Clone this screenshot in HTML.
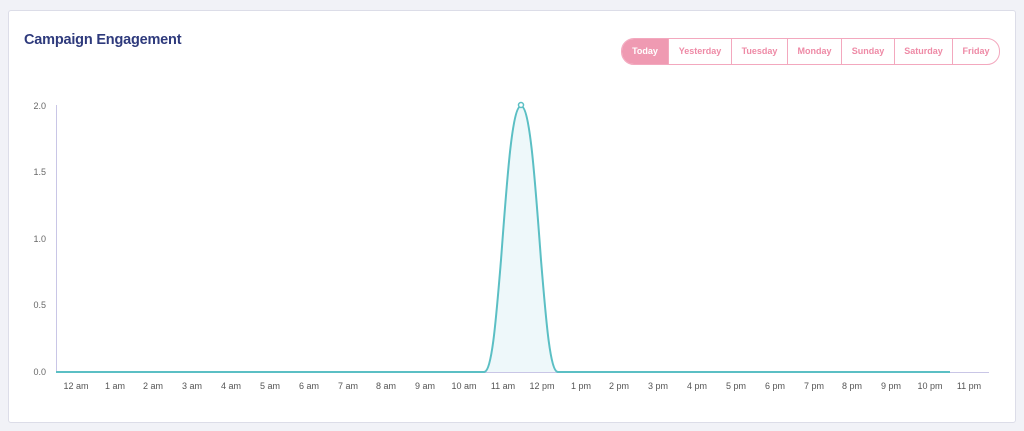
<!DOCTYPE html>
<html><head><style>
body{margin:0;width:1024px;height:431px;background:#f1f2f7;font-family:"Liberation Sans",sans-serif;position:relative;overflow:hidden}
.card{position:absolute;left:8px;top:10px;width:1006px;height:411px;background:#fff;border:1px solid #dcdde8;border-radius:3px}
h1{position:absolute;left:24px;top:32px;margin:0;font-size:14.5px;font-weight:bold;color:#2e3a7c;letter-spacing:-0.2px}
.tabs{position:absolute;left:621px;top:38px;height:25px;display:flex;border:1px solid #f3a8be;border-radius:13px;overflow:hidden}
.tabs div{height:25px;line-height:25px;text-align:center;font-size:9px;color:#ee8aa6;border-left:1px solid #f3a8be;box-sizing:border-box;font-weight:bold}
.tabs div:first-child{border-left:none;background:#ef9ab2;color:#fff}
.yl{position:absolute;font-size:9px;color:#666;width:30px;text-align:right;left:16px}
.xl{position:absolute;top:381px;font-size:9px;color:#555;width:40px;text-align:center}
</style></head><body>
<div class="card"></div>
<h1>Campaign Engagement</h1>
<div class="tabs">
<div style="width:46px">Today</div><div style="width:63px">Yesterday</div><div style="width:56px">Tuesday</div><div style="width:54px">Monday</div><div style="width:53px">Sunday</div><div style="width:58px">Saturday</div><div style="width:47px">Friday</div>
</div>
<div class="yl" style="top:101px">2.0</div>
<div class="yl" style="top:167px">1.5</div>
<div class="yl" style="top:234px">1.0</div>
<div class="yl" style="top:300px">0.5</div>
<div class="yl" style="top:367px">0.0</div>
<svg width="1024" height="431" style="position:absolute;left:0;top:0">
<line x1="56.5" y1="105" x2="56.5" y2="372" stroke="#c9c6e6" stroke-width="1"/>
<line x1="56" y1="372.5" x2="989" y2="372.5" stroke="#c9c6e6" stroke-width="1"/>
<path d="M484 372 C492 372 496 320 501 260 C507 180 512 106 521 106 C530 106 535 180 541 260 C546 320 550 372 558 372 Z" fill="#eef8fa"/>
<path d="M56 372 L484 372 C492 372 496 320 501 260 C507 180 512 106 521 106 C530 106 535 180 541 260 C546 320 550 372 558 372 L950 372" fill="none" stroke="#5bbfc4" stroke-width="2"/>
<circle cx="521" cy="105" r="2.5" fill="#fff" stroke="#5bbfc4" stroke-width="1.5"/>
</svg>
<div class="xl" style="left:56px">12 am</div><div class="xl" style="left:95px">1 am</div><div class="xl" style="left:133px">2 am</div><div class="xl" style="left:172px">3 am</div><div class="xl" style="left:211px">4 am</div><div class="xl" style="left:250px">5 am</div><div class="xl" style="left:289px">6 am</div><div class="xl" style="left:328px">7 am</div><div class="xl" style="left:366px">8 am</div><div class="xl" style="left:405px">9 am</div><div class="xl" style="left:444px">10 am</div><div class="xl" style="left:483px">11 am</div><div class="xl" style="left:522px">12 pm</div><div class="xl" style="left:561px">1 pm</div><div class="xl" style="left:599px">2 pm</div><div class="xl" style="left:638px">3 pm</div><div class="xl" style="left:677px">4 pm</div><div class="xl" style="left:716px">5 pm</div><div class="xl" style="left:755px">6 pm</div><div class="xl" style="left:794px">7 pm</div><div class="xl" style="left:832px">8 pm</div><div class="xl" style="left:871px">9 pm</div><div class="xl" style="left:910px">10 pm</div><div class="xl" style="left:949px">11 pm</div>
</body></html>
